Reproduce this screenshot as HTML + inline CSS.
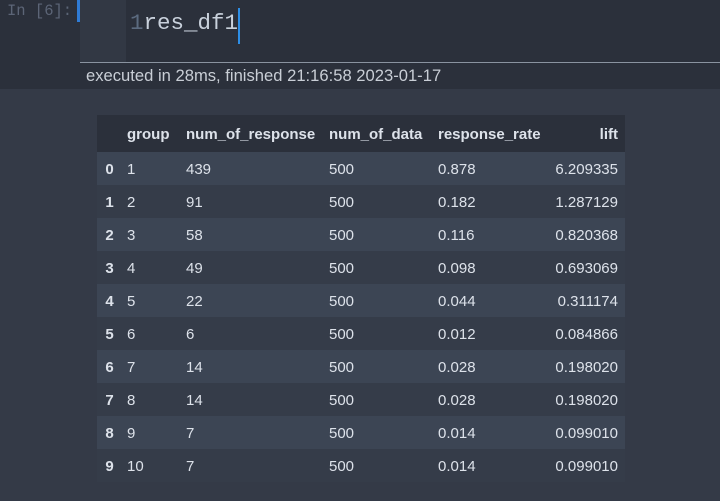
<!DOCTYPE html><html><head><style>
body{margin:0;width:720px;height:501px;background:#343a47;font-family:"Liberation Sans",sans-serif;overflow:hidden;position:relative}
.top{position:absolute;left:0;top:0;width:720px;height:89px;background:#2b303b}
.prompt{position:absolute;left:7px;top:2px;font:15.5px "Liberation Mono",monospace;color:#5c6577}
.bar{position:absolute;left:77px;top:0;width:3px;height:22px;background:#2f7bd5}
.gut{position:absolute;left:80px;top:0;width:46px;height:62px;background:#323844}
.code{position:absolute;left:130px;top:10px;font:22.5px "Liberation Mono",monospace;color:#c9d1dc}
.code span{color:#5c6b80}
.cur{position:absolute;left:238px;top:8px;width:2px;height:36px;background:#2d8ee6}
.line{position:absolute;left:80px;top:62px;width:640px;height:1px;background:#8a93a0}
.exec{position:absolute;left:80px;top:63px;width:640px;height:26px;color:#c9ced6;font-size:16.6px;line-height:26px;padding-left:6px}
table{position:absolute;left:97px;top:115px;border-collapse:collapse;font-size:15px;color:#dde2ea;width:528px;table-layout:fixed}
th,td{padding:2px 0 0 7px;text-align:left;white-space:nowrap;overflow:visible}
thead tr{background:#2b303b;height:37px}
th{font-weight:bold}
tbody tr{height:33px}
tbody tr:nth-child(odd){background:#3c4554}
tbody tr:nth-child(even){background:#353c49}
td.i{font-weight:bold;text-align:center;padding-left:2px}
td.r,th.r{text-align:right;padding-right:7px}
</style></head><body>
<div class="top"></div><div class="gut"></div><div class="prompt">In [6]:</div><div class="bar"></div>
<div class="code"><span>1</span>res_df1</div><div class="cur"></div>
<div class="line"></div><div class="exec">executed in 28ms, finished 21:16:58 2023-01-17</div>
<table><colgroup><col style="width:23px"><col style="width:59px"><col style="width:143px"><col style="width:109px"><col style="width:110px"><col></colgroup>
<thead><tr><th></th><th>group</th><th>num_of_response</th><th>num_of_data</th><th>response_rate</th><th class="r">lift</th></tr></thead><tbody>
<tr><td class="i">0</td><td>1</td><td>439</td><td>500</td><td>0.878</td><td class="r">6.209335</td></tr>
<tr><td class="i">1</td><td>2</td><td>91</td><td>500</td><td>0.182</td><td class="r">1.287129</td></tr>
<tr><td class="i">2</td><td>3</td><td>58</td><td>500</td><td>0.116</td><td class="r">0.820368</td></tr>
<tr><td class="i">3</td><td>4</td><td>49</td><td>500</td><td>0.098</td><td class="r">0.693069</td></tr>
<tr><td class="i">4</td><td>5</td><td>22</td><td>500</td><td>0.044</td><td class="r">0.311174</td></tr>
<tr><td class="i">5</td><td>6</td><td>6</td><td>500</td><td>0.012</td><td class="r">0.084866</td></tr>
<tr><td class="i">6</td><td>7</td><td>14</td><td>500</td><td>0.028</td><td class="r">0.198020</td></tr>
<tr><td class="i">7</td><td>8</td><td>14</td><td>500</td><td>0.028</td><td class="r">0.198020</td></tr>
<tr><td class="i">8</td><td>9</td><td>7</td><td>500</td><td>0.014</td><td class="r">0.099010</td></tr>
<tr><td class="i">9</td><td>10</td><td>7</td><td>500</td><td>0.014</td><td class="r">0.099010</td></tr>
</tbody></table>
</body></html>
